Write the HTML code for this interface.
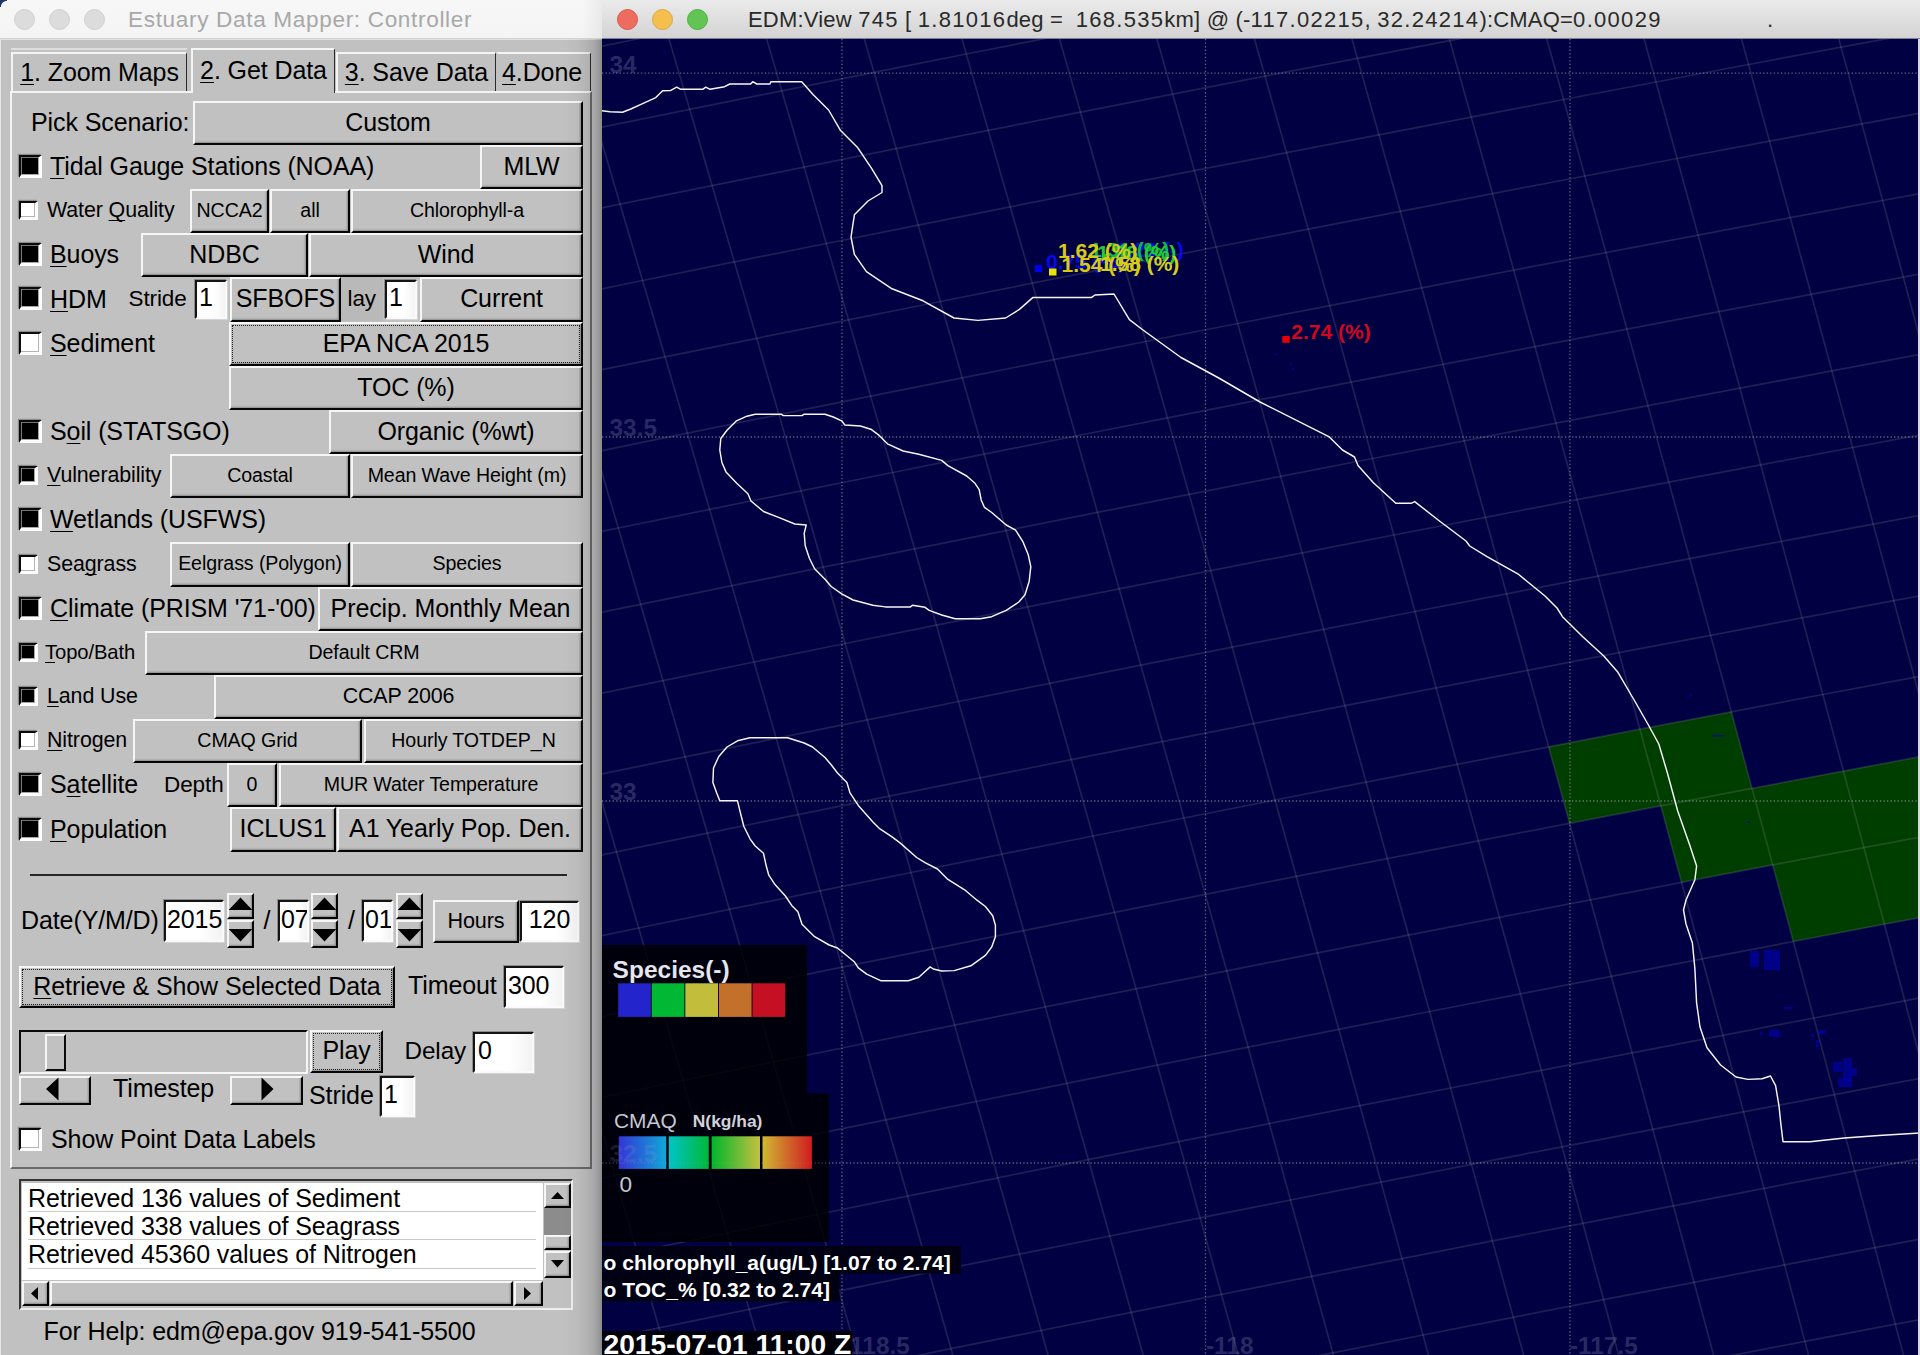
<!DOCTYPE html>
<html lang="en"><head><meta charset="utf-8"><title>Estuary Data Mapper</title>
<style>
*{box-sizing:border-box;margin:0;padding:0}
html,body{width:1920px;height:1355px;overflow:hidden;background:#000040}
body{position:relative;font-family:"Liberation Sans",sans-serif;font-size:25px;color:#000}
#ctl{letter-spacing:-.1px;position:absolute;left:0;top:0;width:602px;height:1355px;background:#c1c1c1;overflow:hidden}
#ctl .tbar{position:absolute;left:0;top:0;width:602px;height:40px;background:linear-gradient(#f7f7f7,#f4f4f4);border-bottom:1px solid #e2e2e2;box-shadow:inset 0 -1px 0 #d2d2d2}
.tl{position:absolute;top:8.5px;width:21px;height:21px;border-radius:50%}
.ttl{position:absolute;top:0;height:38px;line-height:39px;white-space:pre}
.a{position:absolute;white-space:pre}
.b{position:absolute;background:#c1c1c1;border:2px solid;border-color:#f6f6f6 #050505 #050505 #f6f6f6;text-align:center;white-space:pre;overflow:hidden;box-shadow:inset -2px -2px 2px -1px #8a8a8a}
.b i{position:absolute;left:1px;top:1px;right:1px;bottom:1px;border:1px dotted #222}
.t{position:absolute;white-space:pre}
.t u,.b u,.a u{text-decoration:underline;text-decoration-thickness:1.4px;text-underline-offset:3px;text-decoration-skip-ink:none}
.in{position:absolute;background:linear-gradient(90deg,#fff 60%,#f3f3f3);border:2px solid;border-color:#141414 #fafafa #fafafa #141414;white-space:pre;overflow:hidden;box-shadow:-1px -1px 0 #8c8c8c,1px 1px 0 #d4d4d4}
.ck{position:absolute;border-style:solid;border-width:2px 3px 3px 2px;border-color:#0a0a0a #fcfcfc #fcfcfc #0a0a0a;background:#fff;box-shadow:-1.2px -1.2px 0 #8c8c8c,inset -1px -1px 0 #b4b4b4}
.ck.on{background:#000;box-shadow:-1.2px -1.2px 0 #8c8c8c,inset -1px -1px 0 #a8a8a8,inset .8px .8px 0 #9a9a9a}
#map{position:absolute;left:602px;top:0;width:1318px;height:1355px;background:#000042;overflow:hidden}
#map .tbar{position:absolute;left:0;top:0;width:1318px;height:39px;background:linear-gradient(#ebebeb,#d3d3d3);border-bottom:1px solid #80809a}
svg text{font-family:"Liberation Sans",sans-serif}
</style></head>
<body>
<div id="ctl">
<div class="tbar"></div>
<div class="a" style="left:0;top:0;width:7px;height:7px;background:radial-gradient(circle at 7px 7px,rgba(31,53,102,0) 5.6px,#1f3566 6.6px)"></div>
<div class="a" style="left:0;top:40px;width:1px;height:1315px;background:#e6e6e6"></div>
<div class="tl" style="left:13.8px;background:#dcdcdc;border:1px solid #d0d0d0"></div>
<div class="tl" style="left:49.1px;background:#dcdcdc;border:1px solid #d0d0d0"></div>
<div class="tl" style="left:84.4px;background:#dcdcdc;border:1px solid #d0d0d0"></div>
<div class="ttl" style="left:128px;color:#a8a8a8;font-size:22.6px;letter-spacing:.65px">Estuary Data Mapper: Controller</div>
<div class="a" style="left:11px;top:48px;width:176px;height:2px;background:#dedede"></div>
<div class="a" style="left:10px;top:91px;width:582px;height:1078px;border:2px solid;border-color:#f4f4f4 #6a6a6a #6a6a6a #f4f4f4"></div>
<div class="a" style="left:11px;top:52px;width:176px;height:39px;background:#c1c1c1;border:2px solid;border-color:#f4f4f4 #2a2a2a transparent #f4f4f4;border-right-width:1.5px;border-bottom:0;text-align:center;line-height:36px;"><u>1</u>. Zoom Maps</div>
<div class="a" style="left:336px;top:52px;width:160px;height:39px;background:#c1c1c1;border:2px solid;border-color:#f4f4f4 #2a2a2a transparent #f4f4f4;border-right-width:1.5px;border-bottom:0;text-align:center;line-height:36px;"><u>3</u>. Save Data</div>
<div class="a" style="left:496px;top:52px;width:95px;height:39px;background:#c1c1c1;border:2px solid;border-color:#f4f4f4 #2a2a2a transparent #f4f4f4;border-right-width:1.5px;border-bottom:0;text-align:center;line-height:36px;border-left-color:transparent;padding-right:4px"><u>4</u>.Done</div>
<div class="a" style="left:191px;top:48px;width:144px;height:45px;background:#c1c1c1;border:2px solid;border-color:#f4f4f4 #2a2a2a transparent #f4f4f4;border-right-width:1.5px;border-bottom:0;text-align:center;line-height:40px"><u>2</u>. Get Data</div>
<div class="t" style="left:31px;top:102.0px;height:40px;line-height:40px;font-size:25.0px;">Pick Scenario:</div>
<div class="b" style="left:193px;top:101px;width:390px;height:44px;line-height:38px;font-size:25.0px;">Custom</div>
<div class="ck on" style="left:19px;top:155px;width:23px;height:23px"></div>
<div class="t" style="left:50px;top:146.0px;height:40px;line-height:40px;font-size:25.0px;"><u>T</u>idal Gauge Stations (NOAA)</div>
<div class="b" style="left:480px;top:145px;width:103px;height:44px;line-height:38px;font-size:25.0px;">MLW</div>
<div class="ck" style="left:19px;top:201px;width:19px;height:19px"></div>
<div class="t" style="left:47px;top:190.0px;height:40px;line-height:40px;font-size:21.4px;">Water <u>Q</u>uality</div>
<div class="b" style="left:190px;top:189px;width:79px;height:44px;line-height:38px;font-size:19.6px;">NCCA2</div>
<div class="b" style="left:270px;top:189px;width:80px;height:44px;line-height:38px;font-size:19.6px;">all</div>
<div class="b" style="left:351px;top:189px;width:232px;height:44px;line-height:38px;font-size:19.6px;">Chlorophyll-a</div>
<div class="ck on" style="left:19px;top:243px;width:23px;height:23px"></div>
<div class="t" style="left:50px;top:234.0px;height:40px;line-height:40px;font-size:25.0px;"><u>B</u>uoys</div>
<div class="b" style="left:141px;top:233px;width:167px;height:44px;line-height:38px;font-size:25.0px;">NDBC</div>
<div class="b" style="left:309px;top:233px;width:274px;height:44px;line-height:38px;font-size:25.0px;">Wind</div>
<div class="ck on" style="left:19px;top:287px;width:23px;height:23px"></div>
<div class="t" style="left:50px;top:278.5px;height:40px;line-height:40px;font-size:25.0px;"><u>H</u>DM</div>
<div class="t" style="left:128.5px;top:278.5px;height:40px;line-height:40px;font-size:22.5px;">Stride</div>
<div class="in" style="left:195px;top:280px;width:32px;height:39px;line-height:31px;font-size:25.0px;padding-left:2px;text-align:left">1</div>
<div class="b" style="left:230px;top:277px;width:111px;height:45px;line-height:39px;font-size:25.0px;">SFBOFS</div>
<div class="a" style="left:341px;top:277px;width:42px;height:44px;background:#b9b9b9"></div>
<div class="t" style="left:347.5px;top:278.5px;height:40px;line-height:40px;font-size:22.5px;">lay</div>
<div class="in" style="left:385px;top:280px;width:32px;height:39px;line-height:31px;font-size:25.0px;padding-left:2px;text-align:left">1</div>
<div class="b" style="left:420px;top:277px;width:163px;height:45px;line-height:39px;font-size:25.0px;">Current</div>
<div class="ck" style="left:19px;top:332px;width:23px;height:23px"></div>
<div class="t" style="left:50px;top:323.0px;height:40px;line-height:40px;font-size:25.0px;"><u>S</u>ediment</div>
<div class="b" style="left:229px;top:322px;width:354px;height:44px;line-height:38px;font-size:25.0px;"><i></i>EPA NCA 2015</div>
<div class="b" style="left:229px;top:366px;width:354px;height:44px;line-height:38px;font-size:25.0px;">TOC (%)</div>
<div class="ck on" style="left:19px;top:420px;width:23px;height:23px"></div>
<div class="t" style="left:50px;top:411.0px;height:40px;line-height:40px;font-size:25.0px;">S<u>o</u>il (STATSGO)</div>
<div class="b" style="left:329px;top:410px;width:254px;height:44px;line-height:38px;font-size:25.0px;">Organic (%wt)</div>
<div class="ck on" style="left:19px;top:466px;width:19px;height:19px"></div>
<div class="t" style="left:47px;top:455.0px;height:40px;line-height:40px;font-size:21.4px;"><u>V</u>ulnerability</div>
<div class="b" style="left:170px;top:454px;width:180px;height:44px;line-height:38px;font-size:19.6px;">Coastal</div>
<div class="b" style="left:351px;top:454px;width:232px;height:44px;line-height:38px;font-size:19.6px;">Mean Wave Height (m)</div>
<div class="ck on" style="left:19px;top:508px;width:23px;height:23px"></div>
<div class="t" style="left:50px;top:499.0px;height:40px;line-height:40px;font-size:25.0px;"><u>W</u>etlands (USFWS)</div>
<div class="ck" style="left:19px;top:555px;width:19px;height:19px"></div>
<div class="t" style="left:47px;top:543.5px;height:40px;line-height:40px;font-size:21.4px;">Sea<u>g</u>rass</div>
<div class="b" style="left:170px;top:542px;width:180px;height:45px;line-height:39px;font-size:19.6px;">Eelgrass (Polygon)</div>
<div class="b" style="left:351px;top:542px;width:232px;height:45px;line-height:39px;font-size:19.6px;">Species</div>
<div class="ck on" style="left:19px;top:597px;width:23px;height:23px"></div>
<div class="t" style="left:50px;top:588.0px;height:40px;line-height:40px;font-size:25.0px;"><u>C</u>limate (PRISM '71-'00)</div>
<div class="b" style="left:318px;top:587px;width:265px;height:44px;line-height:38px;font-size:25.0px;">Precip. Monthly Mean</div>
<div class="ck on" style="left:19px;top:643px;width:19px;height:19px"></div>
<div class="t" style="left:45px;top:632.0px;height:40px;line-height:40px;font-size:20.2px;"><u>T</u>opo/Bath</div>
<div class="b" style="left:145px;top:631px;width:438px;height:44px;line-height:38px;font-size:19.6px;">Default CRM</div>
<div class="ck on" style="left:19px;top:687px;width:19px;height:19px"></div>
<div class="t" style="left:47px;top:676.0px;height:40px;line-height:40px;font-size:21.4px;"><u>L</u>and Use</div>
<div class="b" style="left:214px;top:675px;width:369px;height:44px;line-height:38px;font-size:21.4px;">CCAP 2006</div>
<div class="ck" style="left:19px;top:731px;width:19px;height:19px"></div>
<div class="t" style="left:47px;top:720.0px;height:40px;line-height:40px;font-size:21.4px;"><u>N</u>itrogen</div>
<div class="b" style="left:133px;top:719px;width:229px;height:44px;line-height:38px;font-size:19.6px;">CMAQ Grid</div>
<div class="b" style="left:364px;top:719px;width:219px;height:44px;line-height:38px;font-size:19.6px;">Hourly TOTDEP_N</div>
<div class="ck on" style="left:19px;top:773px;width:23px;height:23px"></div>
<div class="t" style="left:50px;top:764.0px;height:40px;line-height:40px;font-size:25.0px;">S<u>a</u>tellite</div>
<div class="t" style="left:164px;top:765.0px;height:40px;line-height:40px;font-size:22.5px;">Depth</div>
<div class="b" style="left:227px;top:763px;width:50px;height:44px;line-height:38px;font-size:19.6px;">0</div>
<div class="b" style="left:279px;top:763px;width:304px;height:44px;line-height:38px;font-size:19.6px;">MUR Water Temperature</div>
<div class="ck on" style="left:19px;top:818px;width:23px;height:23px"></div>
<div class="t" style="left:50px;top:808.5px;height:40px;line-height:40px;font-size:25.0px;"><u>P</u>opulation</div>
<div class="b" style="left:230px;top:807px;width:106px;height:45px;line-height:39px;font-size:25.0px;">ICLUS1</div>
<div class="b" style="left:337px;top:807px;width:246px;height:45px;line-height:39px;font-size:25.0px;">A1 Yearly Pop. Den.</div>
<div class="a" style="left:30px;top:874px;width:537px;height:0;border-top:2px solid #262626"></div>
<div class="t" style="left:21px;top:900.0px;height:40px;line-height:40px;font-size:25.0px;">Date(Y/M/D)</div>
<div class="in" style="left:164px;top:900px;width:60px;height:42px;line-height:34px;font-size:25.0px;padding-left:1px;text-align:left">2015</div>
<div class="b" style="left:227px;top:893px;width:27px;height:26px"></div>
<div class="b" style="left:227px;top:920px;width:27px;height:28px"></div>
<svg class="a" style="left:227px;top:893px" width="27" height="56"><path d="M13.5 4.5 L25.3 17 L1.6999999999999993 17Z M1.6999999999999993 36 L25.3 36 L13.5 48.5Z" fill="#000"/></svg>
<div class="t" style="left:263.5px;top:900.0px;height:40px;line-height:40px;font-size:25.0px;">/</div>
<div class="in" style="left:278px;top:900px;width:31px;height:42px;line-height:34px;font-size:25.0px;padding-left:1px;text-align:left">07</div>
<div class="b" style="left:311px;top:893px;width:27px;height:26px"></div>
<div class="b" style="left:311px;top:920px;width:27px;height:28px"></div>
<svg class="a" style="left:311px;top:893px" width="27" height="56"><path d="M13.5 4.5 L25.3 17 L1.6999999999999993 17Z M1.6999999999999993 36 L25.3 36 L13.5 48.5Z" fill="#000"/></svg>
<div class="t" style="left:348px;top:900.0px;height:40px;line-height:40px;font-size:25.0px;">/</div>
<div class="in" style="left:362px;top:900px;width:31px;height:42px;line-height:34px;font-size:25.0px;padding-left:1px;text-align:left">01</div>
<div class="b" style="left:396px;top:893px;width:27px;height:26px"></div>
<div class="b" style="left:396px;top:920px;width:27px;height:28px"></div>
<svg class="a" style="left:396px;top:893px" width="27" height="56"><path d="M13.5 4.5 L25.3 17 L1.6999999999999993 17Z M1.6999999999999993 36 L25.3 36 L13.5 48.5Z" fill="#000"/></svg>
<div class="b" style="left:433px;top:900px;width:86px;height:43px;line-height:37px;font-size:21.6px;">Hours</div>
<div class="in" style="left:520px;top:901px;width:59px;height:41px;line-height:33px;font-size:25.0px;padding-left:0px;text-align:center">120</div>
<div class="b" style="left:19px;top:966px;width:376px;height:42px;line-height:36px;font-size:25.0px;"><i></i><u>R</u>etrieve &amp; Show Selected Data</div>
<div class="t" style="left:408px;top:965.0px;height:40px;line-height:40px;font-size:25.0px;">Timeout</div>
<div class="in" style="left:504px;top:966px;width:60px;height:42px;line-height:34px;font-size:25.0px;padding-left:2px;text-align:left">300</div>
<div class="a" style="left:19px;top:1030px;width:289px;height:44px;border:2px solid;border-color:#0a0a0a #f6f6f6 #f6f6f6 #0a0a0a;background:#c1c1c1"></div>
<div class="a" style="left:45px;top:1034px;width:21px;height:37px;border:2px solid;border-color:#f6f6f6 #0a0a0a #0a0a0a #f6f6f6"></div>
<div class="b" style="left:310px;top:1030px;width:73px;height:43px;line-height:37px;font-size:25.0px;"><i></i>Play</div>
<div class="t" style="left:404.5px;top:1031.0px;height:40px;line-height:40px;font-size:24.3px;">Delay</div>
<div class="in" style="left:473px;top:1032px;width:61px;height:41px;line-height:33px;font-size:25.0px;padding-left:3px;text-align:left">0</div>
<div class="b" style="left:19px;top:1076px;width:72px;height:29px;line-height:23px;font-size:25.0px;"></div>
<div class="b" style="left:230px;top:1076px;width:73px;height:29px;line-height:23px;font-size:25.0px;"></div>
<svg class="a" style="left:19px;top:1076px" width="290" height="30"><path d="M27 13 L39.5 1.5 L39.5 24.5Z M242.5 1.5 L254.5 13 L242.5 24.5Z" fill="#000"/></svg>
<div class="t" style="left:113px;top:1067.5px;height:40px;line-height:40px;font-size:25.0px;">Timestep</div>
<div class="t" style="left:309px;top:1075.0px;height:40px;line-height:40px;font-size:25.0px;">Stride</div>
<div class="in" style="left:380px;top:1076px;width:35px;height:41px;line-height:33px;font-size:25.0px;padding-left:2px;text-align:left">1</div>
<div class="ck" style="left:19px;top:1128px;width:23px;height:23px"></div>
<div class="t" style="left:51px;top:1119.0px;height:40px;line-height:40px;font-size:25.0px;">Show Point Data Labels</div>
<div class="a" style="left:19px;top:1179px;width:554px;height:131px;border:2px solid;border-color:#333 #eee #eee #333"></div>
<div class="a" style="left:22px;top:1183px;width:521px;height:97px;background:#fff;overflow:hidden">
<div class="a" style="left:6px;top:1.0px;width:508px;height:28.2px;line-height:28px;border-bottom:1px solid #c9c9c9">Retrieved 136 values of Sediment</div>
<div class="a" style="left:6px;top:29.2px;width:508px;height:28.2px;line-height:28px;border-bottom:1px solid #c9c9c9">Retrieved 338 values of Seagrass</div>
<div class="a" style="left:6px;top:57.4px;width:508px;height:28.2px;line-height:28px;border-bottom:1px solid #c9c9c9">Retrieved 45360 values of Nitrogen</div>
</div>
<div class="a" style="left:544px;top:1183px;width:27px;height:95px;background:#c8c8c8"></div>
<div class="b" style="left:544px;top:1183px;width:27px;height:25px;line-height:19px;font-size:25.0px;"></div>
<div class="a" style="left:544px;top:1208px;width:27px;height:27px;background:#8c8c8c"></div>
<div class="b" style="left:544px;top:1235px;width:27px;height:15px;line-height:9px;font-size:25.0px;"></div>
<div class="b" style="left:544px;top:1251px;width:27px;height:27px;line-height:21px;font-size:25.0px;"></div>
<svg class="a" style="left:544px;top:1183px" width="27" height="95"><path d="M7 16 L13.5 9 L20 16Z M7 77 L20 77 L13.5 84.5Z" fill="#000"/></svg>
<div class="a" style="left:22px;top:1281px;width:521px;height:25px;background:#c1c1c1"></div>
<div class="b" style="left:22px;top:1281px;width:27px;height:25px;line-height:19px;font-size:25.0px;"></div>
<div class="b" style="left:50px;top:1281px;width:463px;height:25px;line-height:19px;font-size:25.0px;"></div>
<div class="b" style="left:514px;top:1281px;width:29px;height:25px;line-height:19px;font-size:25.0px;"></div>
<svg class="a" style="left:22px;top:1281px" width="521" height="25"><path d="M9 12.5 L16 6 L16 19Z M502 6 L509 12.5 L502 19Z" fill="#000"/></svg>
<div class="t" style="left:43.5px;top:1311.0px;height:40px;line-height:40px;font-size:25.0px;">For Help: edm@epa.gov 919-541-5500</div>
<div class="a" style="left:562px;top:39px;width:40px;height:1316px;background:linear-gradient(90deg,rgba(0,0,0,0) 0,rgba(0,0,0,.025) 35%,rgba(0,0,0,.07) 60%,rgba(0,0,0,.13) 80%,rgba(0,0,0,.2) 92%,rgba(0,0,0,.29) 100%)"></div>
<div class="a" style="left:582px;top:0;width:20px;height:38px;background:linear-gradient(90deg,rgba(0,0,0,0),rgba(0,0,0,.05))"></div>
</div>
<div id="map">
<svg class="a" style="left:-602px;top:0" width="1920" height="1355" viewBox="0 0 1920 1355">
<defs>
<linearGradient id="g1"><stop offset="0" stop-color="#3434d6"/><stop offset="1" stop-color="#10a8d8"/></linearGradient>
<linearGradient id="g2"><stop offset="0" stop-color="#00c4c8"/><stop offset="1" stop-color="#00b838"/></linearGradient>
<linearGradient id="g3"><stop offset="0" stop-color="#00b62c"/><stop offset="1" stop-color="#c4c040"/></linearGradient>
<linearGradient id="g4"><stop offset="0" stop-color="#d0b832"/><stop offset="1" stop-color="#d01c20"/></linearGradient>
</defs>
<path d="M1548.6 746.8 L1639.9 729.2 L1731.3 711.8 L1752.0 788.4 L1843.4 771.1 L1934.8 753.9 L2026.2 736.8 L2117.7 719.8 L2137.9 796.5 L2158.0 873.1 L2066.7 890.1 L1975.5 907.1 L1884.4 924.2 L1793.3 941.5 L1772.7 864.9 L1681.5 882.3 L1660.8 805.8 L1569.6 823.3Z" fill="#003e00"/>
<g fill="#0000a4" fill-opacity=".72">
<rect x="1750" y="951" width="9" height="16"/>
<rect x="1764" y="950" width="16" height="20"/>
<rect x="1769" y="1030" width="11" height="7"/>
<rect x="1760" y="1032" width="3" height="3"/>
<rect x="1818" y="1030" width="8" height="4"/>
<rect x="1811" y="1034" width="3" height="3"/>
<rect x="1816" y="1040" width="3" height="7"/>
<rect x="1833" y="1062" width="9" height="10"/>
<rect x="1843" y="1058" width="9" height="22"/>
<rect x="1838" y="1078" width="14" height="9"/>
<rect x="1852" y="1068" width="5" height="8"/>
<rect x="1784" y="1007" width="9" height="2"/>
<rect x="1687" y="696.5" width="2.5" height="1.5"/>
<rect x="1689.5" y="694.5" width="2.5" height="1.5"/>
<rect x="1712" y="735" width="12" height="1.6"/>
<rect x="1747" y="821.5" width="3.5" height="1.5"/>
<rect x="1290" y="362.5" width="2" height="2"/>
<rect x="1292" y="368" width="2" height="2"/>
<rect x="664.5" y="51.3" width="2" height="1.6"/>
<rect x="1275" y="353.2" width="2" height="2"/>
</g>
<g stroke="#a4a4ac" stroke-opacity=".19" stroke-width="1.7" fill="none">
<path d="M-47.0 -62.5 L-23.6 13.6 L-0.1 89.8 L23.3 165.9 L46.6 242.0 L69.8 318.2 L93.0 394.3 L116.2 470.5 L139.3 546.6 L162.3 622.8 L185.3 698.9 L208.2 775.1 L231.0 851.2 L253.8 927.4 L276.5 1003.5 L299.2 1079.7 L321.8 1155.8 L344.4 1232.0 L366.9 1308.1 L389.3 1384.3 L411.7 1460.4 L434.1 1536.6 L456.3 1612.8 L478.5 1688.9 L500.7 1765.1 L522.8 1841.2 L544.8 1917.4"/>
<path d="M45.1 -81.9 L68.5 -5.7 L91.8 70.4 L115.1 146.6 L138.3 222.8 L161.4 298.9 L184.5 375.1 L207.5 451.3 L230.5 527.4 L253.4 603.6 L276.2 679.8 L299.0 756.0 L321.7 832.1 L344.4 908.3 L367.0 984.5 L389.6 1060.7 L412.0 1136.8 L434.5 1213.0 L456.9 1289.2 L479.2 1365.4 L501.5 1441.6 L523.7 1517.7 L545.8 1593.9 L567.9 1670.1 L589.9 1746.3 L611.9 1822.5 L633.8 1898.7"/>
<path d="M137.4 -101.2 L160.6 -25.0 L183.8 51.2 L206.9 127.4 L230.0 203.6 L253.0 279.8 L276.0 356.0 L298.9 432.2 L321.7 508.4 L344.5 584.6 L367.2 660.8 L389.9 737.0 L412.5 813.2 L435.0 889.4 L457.5 965.6 L479.9 1041.8 L502.3 1118.0 L524.6 1194.2 L546.9 1270.4 L569.1 1346.6 L591.2 1422.8 L613.3 1499.0 L635.3 1575.2 L657.3 1651.4 L679.2 1727.6 L701.1 1803.8 L722.8 1880.0"/>
<path d="M229.7 -120.4 L252.8 -44.1 L275.9 32.1 L298.9 108.3 L321.8 184.5 L344.7 260.7 L367.5 336.9 L390.3 413.2 L413.0 489.4 L435.7 565.6 L458.3 641.8 L480.8 718.1 L503.3 794.3 L525.7 870.5 L548.1 946.7 L570.4 1023.0 L592.7 1099.2 L614.8 1175.4 L637.0 1251.6 L659.1 1327.9 L681.1 1404.1 L703.0 1480.3 L724.9 1556.6 L746.8 1632.8 L768.6 1709.0 L790.3 1785.3 L811.9 1861.5"/>
<path d="M322.0 -139.4 L345.0 -63.2 L368.0 13.1 L390.9 89.3 L413.7 165.5 L436.5 241.8 L459.2 318.0 L481.8 394.3 L504.4 470.5 L526.9 546.8 L549.4 623.0 L571.8 699.3 L594.2 775.5 L616.5 851.8 L638.7 928.0 L660.9 1004.3 L683.0 1080.5 L705.1 1156.8 L727.1 1233.0 L749.1 1309.3 L771.0 1385.5 L792.8 1461.8 L814.6 1538.0 L836.3 1614.3 L858.0 1690.6 L879.6 1766.8 L901.1 1843.1"/>
<path d="M414.5 -158.4 L437.4 -82.1 L460.2 -5.8 L482.9 70.4 L505.6 146.7 L528.3 223.0 L550.9 299.2 L573.4 375.5 L595.9 451.8 L618.3 528.0 L640.6 604.3 L662.9 680.6 L685.1 756.9 L707.3 833.1 L729.4 909.4 L751.5 985.7 L773.5 1062.0 L795.5 1138.2 L817.3 1214.5 L839.2 1290.8 L860.9 1367.1 L882.6 1443.3 L904.3 1519.6 L925.9 1595.9 L947.4 1672.2 L968.9 1748.5 L990.3 1824.8"/>
<path d="M507.0 -177.2 L529.7 -100.9 L552.4 -24.6 L575.1 51.7 L597.6 127.9 L620.1 204.2 L642.6 280.5 L665.0 356.8 L687.4 433.1 L709.6 509.4 L731.9 585.7 L754.0 662.0 L776.2 738.3 L798.2 814.6 L820.2 890.9 L842.1 967.2 L864.0 1043.5 L885.8 1119.8 L907.6 1196.1 L929.3 1272.4 L951.0 1348.7 L972.6 1425.0 L994.1 1501.3 L1015.6 1577.6 L1037.0 1653.9 L1058.3 1730.3 L1079.6 1806.6"/>
<path d="M599.5 -196.0 L622.2 -119.6 L644.7 -43.3 L667.2 33.0 L689.7 109.3 L712.1 185.6 L734.4 261.9 L756.7 338.3 L778.9 414.6 L801.1 490.9 L823.2 567.2 L845.2 643.5 L867.2 719.9 L889.2 796.2 L911.0 872.5 L932.9 948.8 L954.6 1025.2 L976.3 1101.5 L997.9 1177.8 L1019.5 1254.1 L1041.1 1330.5 L1062.5 1406.8 L1083.9 1483.1 L1105.3 1559.5 L1126.6 1635.8 L1147.8 1712.1 L1169.0 1788.5"/>
<path d="M692.1 -214.6 L714.6 -138.2 L737.1 -61.9 L759.5 14.4 L781.8 90.8 L804.1 167.1 L826.3 243.5 L848.5 319.8 L870.6 396.1 L892.6 472.5 L914.6 548.8 L936.5 625.2 L958.4 701.5 L980.2 777.9 L1001.9 854.2 L1023.6 930.6 L1045.3 1006.9 L1066.8 1083.3 L1088.3 1159.6 L1109.8 1236.0 L1131.2 1312.3 L1152.6 1388.7 L1173.8 1465.0 L1195.1 1541.4 L1216.2 1617.8 L1237.3 1694.1 L1258.4 1770.5"/>
<path d="M784.8 -233.1 L807.2 -156.7 L829.5 -80.4 L851.8 -4.0 L874.0 72.3 L896.2 148.7 L918.2 225.1 L940.3 301.5 L962.3 377.8 L984.2 454.2 L1006.0 530.6 L1027.8 606.9 L1049.6 683.3 L1071.3 759.7 L1092.9 836.0 L1114.5 912.4 L1136.0 988.8 L1157.4 1065.2 L1178.8 1141.6 L1200.1 1217.9 L1221.4 1294.3 L1242.6 1370.7 L1263.8 1447.1 L1284.9 1523.4 L1306.0 1599.8 L1326.9 1676.2 L1347.9 1752.6"/>
<path d="M877.6 -251.5 L899.8 -175.1 L922.0 -98.7 L944.2 -22.4 L966.3 54.0 L988.3 130.4 L1010.2 206.8 L1032.2 283.2 L1054.0 359.6 L1075.8 436.0 L1097.5 512.4 L1119.2 588.8 L1140.8 665.2 L1162.4 741.6 L1183.9 818.0 L1205.3 894.4 L1226.7 970.8 L1248.1 1047.2 L1269.3 1123.6 L1290.5 1200.0 L1311.7 1276.4 L1332.8 1352.8 L1353.8 1429.2 L1374.8 1505.6 L1395.7 1582.0 L1416.6 1658.4 L1437.4 1734.8"/>
<path d="M970.4 -269.8 L992.5 -193.4 L1014.6 -117.0 L1036.6 -40.6 L1058.6 35.8 L1080.5 112.2 L1102.3 188.7 L1124.1 265.1 L1145.8 341.5 L1167.5 417.9 L1189.1 494.3 L1210.7 570.7 L1232.2 647.2 L1253.6 723.6 L1275.0 800.0 L1296.3 876.4 L1317.6 952.9 L1338.8 1029.3 L1359.9 1105.7 L1381.0 1182.1 L1402.0 1258.6 L1423.0 1335.0 L1443.9 1411.4 L1464.8 1487.9 L1485.6 1564.3 L1506.3 1640.7 L1527.0 1717.2"/>
<path d="M1063.2 -288.0 L1085.2 -211.6 L1107.2 -135.2 L1129.1 -58.7 L1150.9 17.7 L1172.7 94.2 L1194.4 170.6 L1216.1 247.0 L1237.7 323.5 L1259.3 399.9 L1280.7 476.4 L1302.2 552.8 L1323.6 629.3 L1344.9 705.7 L1366.1 782.2 L1387.3 858.6 L1408.5 935.1 L1429.5 1011.5 L1450.6 1088.0 L1471.5 1164.4 L1492.4 1240.9 L1513.3 1317.3 L1534.1 1393.8 L1554.8 1470.2 L1575.5 1546.7 L1596.1 1623.1 L1616.7 1699.6"/>
<path d="M1156.2 -306.1 L1178.1 -229.7 L1199.9 -153.2 L1221.7 -76.7 L1243.4 -0.3 L1265.0 76.2 L1286.6 152.7 L1308.2 229.1 L1329.7 305.6 L1351.1 382.1 L1372.4 458.5 L1393.8 535.0 L1415.0 611.5 L1436.2 687.9 L1457.3 764.4 L1478.4 840.9 L1499.4 917.4 L1520.4 993.8 L1541.3 1070.3 L1562.1 1146.8 L1582.9 1223.3 L1603.6 1299.7 L1624.3 1376.2 L1644.9 1452.7 L1665.5 1529.2 L1686.0 1605.7 L1706.4 1682.1"/>
<path d="M1249.2 -324.1 L1270.9 -247.6 L1292.6 -171.1 L1314.3 -94.6 L1335.9 -18.2 L1357.4 58.3 L1378.9 134.8 L1400.3 211.3 L1421.7 287.8 L1443.0 364.3 L1464.2 440.8 L1485.4 517.3 L1506.5 593.8 L1527.6 670.3 L1548.6 746.8 L1569.6 823.3 L1590.4 899.8 L1611.3 976.3 L1632.1 1052.8 L1652.8 1129.3 L1673.4 1205.8 L1694.0 1282.3 L1714.6 1358.8 L1735.1 1435.3 L1755.5 1511.8 L1775.9 1588.3 L1796.2 1664.8"/>
<path d="M1342.2 -342.0 L1363.9 -265.5 L1385.4 -189.0 L1407.0 -112.5 L1428.4 -35.9 L1449.8 40.6 L1471.2 117.1 L1492.5 193.6 L1513.7 270.1 L1534.9 346.6 L1556.0 423.2 L1577.1 499.7 L1598.1 576.2 L1619.0 652.7 L1639.9 729.2 L1660.8 805.8 L1681.5 882.3 L1702.2 958.8 L1722.9 1035.3 L1743.5 1111.9 L1764.0 1188.4 L1784.5 1264.9 L1804.9 1341.4 L1825.3 1418.0 L1845.6 1494.5 L1865.9 1571.0 L1886.0 1647.6"/>
<path d="M1435.3 -359.8 L1456.8 -283.2 L1478.3 -206.7 L1499.7 -130.1 L1521.1 -53.6 L1542.4 22.9 L1563.6 99.5 L1584.8 176.0 L1605.9 252.6 L1626.9 329.1 L1647.9 405.6 L1668.9 482.2 L1689.7 558.7 L1710.6 635.3 L1731.3 711.8 L1752.0 788.4 L1772.7 864.9 L1793.3 941.5 L1813.8 1018.0 L1834.3 1094.6 L1854.7 1171.1 L1875.0 1247.7 L1895.3 1324.2 L1915.6 1400.8 L1935.8 1477.3 L1955.9 1553.9 L1976.0 1630.4"/>
<path d="M1528.5 -377.4 L1549.9 -300.9 L1571.2 -224.3 L1592.5 -147.7 L1613.8 -71.2 L1634.9 5.4 L1656.0 82.0 L1677.1 158.5 L1698.1 235.1 L1719.0 311.7 L1739.9 388.2 L1760.7 464.8 L1781.4 541.4 L1802.1 617.9 L1822.8 694.5 L1843.4 771.1 L1863.9 847.6 L1884.4 924.2 L1904.8 1000.8 L1925.1 1077.4 L1945.4 1153.9 L1965.6 1230.5 L1985.8 1307.1 L2005.9 1383.7 L2026.0 1460.3 L2046.0 1536.8 L2065.9 1613.4"/>
<path d="M1621.8 -395.0 L1643.0 -318.4 L1664.2 -241.8 L1685.4 -165.2 L1706.5 -88.6 L1727.5 -12.0 L1748.5 64.5 L1769.5 141.1 L1790.3 217.7 L1811.1 294.3 L1831.9 370.9 L1852.6 447.5 L1873.2 524.1 L1893.8 600.7 L1914.3 677.3 L1934.8 753.9 L1955.2 830.5 L1975.5 907.1 L1995.8 983.7 L2016.0 1060.3 L2036.2 1136.9 L2056.3 1213.5 L2076.3 1290.1 L2096.3 1366.7 L2116.3 1443.3 L2136.2 1519.9 L2156.0 1596.5"/>
<path d="M1715.1 -412.4 L1736.2 -335.8 L1757.3 -259.2 L1778.3 -182.6 L1799.3 -106.0 L1820.2 -29.4 L1841.1 47.2 L1861.9 123.9 L1882.6 200.5 L1903.3 277.1 L1924.0 353.7 L1944.5 430.3 L1965.0 507.0 L1985.5 583.6 L2005.9 660.2 L2026.2 736.8 L2046.5 813.4 L2066.7 890.1 L2086.9 966.7 L2107.0 1043.3 L2127.0 1119.9 L2147.0 1196.6 L2166.9 1273.2 L2186.8 1349.8 L2206.6 1426.4 L2226.4 1503.1 L2246.1 1579.7"/>
<path d="M1808.4 -429.8 L1829.5 -353.1 L1850.4 -276.5 L1871.3 -199.9 L1892.2 -123.2 L1913.0 -46.6 L1933.7 30.1 L1954.4 106.7 L1975.0 183.3 L1995.6 260.0 L2016.1 336.6 L2036.5 413.3 L2056.9 489.9 L2077.3 566.6 L2097.5 643.2 L2117.7 719.8 L2137.9 796.5 L2158.0 873.1 L2178.0 949.8 L2198.0 1026.4 L2217.9 1103.1 L2237.8 1179.7 L2257.6 1256.4 L2277.3 1333.0 L2297.0 1409.7 L2316.7 1486.3 L2336.2 1563.0"/>
<path d="M1901.9 -447.0 L1922.8 -370.3 L1943.6 -293.7 L1964.4 -217.0 L1985.1 -140.4 L2005.8 -63.7 L2026.4 13.0 L2047.0 89.6 L2067.5 166.3 L2087.9 243.0 L2108.3 319.6 L2128.6 396.3 L2148.9 473.0 L2169.1 549.6 L2189.2 626.3 L2209.3 703.0 L2229.3 779.7 L2249.3 856.3 L2269.2 933.0 L2289.1 1009.7 L2308.9 1086.3 L2328.6 1163.0 L2348.3 1239.7 L2367.9 1316.4 L2387.5 1393.1 L2407.0 1469.7 L2426.5 1546.4"/>
<path d="M-115.5 33.1 L-23.6 13.6 L68.5 -5.7 L160.6 -25.0 L252.8 -44.1 L345.0 -63.2 L437.4 -82.1 L529.7 -100.9 L622.2 -119.6 L714.6 -138.2 L807.2 -156.7 L899.8 -175.1 L992.5 -193.4 L1085.2 -211.6 L1178.1 -229.7 L1270.9 -247.6 L1363.9 -265.5 L1456.8 -283.2 L1549.9 -300.9 L1643.0 -318.4 L1736.2 -335.8 L1829.5 -353.1 L1922.8 -370.3 L2016.1 -387.4"/>
<path d="M-92.0 109.2 L-0.1 89.8 L91.8 70.4 L183.8 51.2 L275.9 32.1 L368.0 13.1 L460.2 -5.8 L552.4 -24.6 L644.7 -43.3 L737.1 -61.9 L829.5 -80.4 L922.0 -98.7 L1014.6 -117.0 L1107.2 -135.2 L1199.9 -153.2 L1292.6 -171.1 L1385.4 -189.0 L1478.3 -206.7 L1571.2 -224.3 L1664.2 -241.8 L1757.3 -259.2 L1850.4 -276.5 L1943.6 -293.7 L2036.9 -310.8"/>
<path d="M-68.5 185.3 L23.3 165.9 L115.1 146.6 L206.9 127.4 L298.9 108.3 L390.9 89.3 L482.9 70.4 L575.1 51.7 L667.2 33.0 L759.5 14.4 L851.8 -4.0 L944.2 -22.4 L1036.6 -40.6 L1129.1 -58.7 L1221.7 -76.7 L1314.3 -94.6 L1407.0 -112.5 L1499.7 -130.1 L1592.5 -147.7 L1685.4 -165.2 L1778.3 -182.6 L1871.3 -199.9 L1964.4 -217.0 L2057.5 -234.1"/>
<path d="M-45.1 261.4 L46.6 242.0 L138.3 222.8 L230.0 203.6 L321.8 184.5 L413.7 165.5 L505.6 146.7 L597.6 127.9 L689.7 109.3 L781.8 90.8 L874.0 72.3 L966.3 54.0 L1058.6 35.8 L1150.9 17.7 L1243.4 -0.3 L1335.9 -18.2 L1428.4 -35.9 L1521.1 -53.6 L1613.8 -71.2 L1706.5 -88.6 L1799.3 -106.0 L1892.2 -123.2 L1985.1 -140.4 L2078.1 -157.4"/>
<path d="M-21.7 337.6 L69.8 318.2 L161.4 298.9 L253.0 279.8 L344.7 260.7 L436.5 241.8 L528.3 223.0 L620.1 204.2 L712.1 185.6 L804.1 167.1 L896.2 148.7 L988.3 130.4 L1080.5 112.2 L1172.7 94.2 L1265.0 76.2 L1357.4 58.3 L1449.8 40.6 L1542.4 22.9 L1634.9 5.4 L1727.5 -12.0 L1820.2 -29.4 L1913.0 -46.6 L2005.8 -63.7 L2098.7 -80.7"/>
<path d="M1.7 413.7 L93.0 394.3 L184.5 375.1 L276.0 356.0 L367.5 336.9 L459.2 318.0 L550.9 299.2 L642.6 280.5 L734.4 261.9 L826.3 243.5 L918.2 225.1 L1010.2 206.8 L1102.3 188.7 L1194.4 170.6 L1286.6 152.7 L1378.9 134.8 L1471.2 117.1 L1563.6 99.5 L1656.0 82.0 L1748.5 64.5 L1841.1 47.2 L1933.7 30.1 L2026.4 13.0 L2119.2 -4.0"/>
<path d="M24.9 489.8 L116.2 470.5 L207.5 451.3 L298.9 432.2 L390.3 413.2 L481.8 394.3 L573.4 375.5 L665.0 356.8 L756.7 338.3 L848.5 319.8 L940.3 301.5 L1032.2 283.2 L1124.1 265.1 L1216.1 247.0 L1308.2 229.1 L1400.3 211.3 L1492.5 193.6 L1584.8 176.0 L1677.1 158.5 L1769.5 141.1 L1861.9 123.9 L1954.4 106.7 L2047.0 89.6 L2139.6 72.7"/>
<path d="M48.1 565.9 L139.3 546.6 L230.5 527.4 L321.7 508.4 L413.0 489.4 L504.4 470.5 L595.9 451.8 L687.4 433.1 L778.9 414.6 L870.6 396.1 L962.3 377.8 L1054.0 359.6 L1145.8 341.5 L1237.7 323.5 L1329.7 305.6 L1421.7 287.8 L1513.7 270.1 L1605.9 252.6 L1698.1 235.1 L1790.3 217.7 L1882.6 200.5 L1975.0 183.3 L2067.5 166.3 L2160.0 149.4"/>
<path d="M71.3 642.0 L162.3 622.8 L253.4 603.6 L344.5 584.6 L435.7 565.6 L526.9 546.8 L618.3 528.0 L709.6 509.4 L801.1 490.9 L892.6 472.5 L984.2 454.2 L1075.8 436.0 L1167.5 417.9 L1259.3 399.9 L1351.1 382.1 L1443.0 364.3 L1534.9 346.6 L1626.9 329.1 L1719.0 311.7 L1811.1 294.3 L1903.3 277.1 L1995.6 260.0 L2087.9 243.0 L2180.3 226.1"/>
<path d="M94.4 718.2 L185.3 698.9 L276.2 679.8 L367.2 660.8 L458.3 641.8 L549.4 623.0 L640.6 604.3 L731.9 585.7 L823.2 567.2 L914.6 548.8 L1006.0 530.6 L1097.5 512.4 L1189.1 494.3 L1280.7 476.4 L1372.4 458.5 L1464.2 440.8 L1556.0 423.2 L1647.9 405.6 L1739.9 388.2 L1831.9 370.9 L1924.0 353.7 L2016.1 336.6 L2108.3 319.6 L2200.5 302.8"/>
<path d="M117.4 794.3 L208.2 775.1 L299.0 756.0 L389.9 737.0 L480.8 718.1 L571.8 699.3 L662.9 680.6 L754.0 662.0 L845.2 643.5 L936.5 625.2 L1027.8 606.9 L1119.2 588.8 L1210.7 570.7 L1302.2 552.8 L1393.8 535.0 L1485.4 517.3 L1577.1 499.7 L1668.9 482.2 L1760.7 464.8 L1852.6 447.5 L1944.5 430.3 L2036.5 413.3 L2128.6 396.3 L2220.7 379.4"/>
<path d="M140.4 870.4 L231.0 851.2 L321.7 832.1 L412.5 813.2 L503.3 794.3 L594.2 775.5 L685.1 756.9 L776.2 738.3 L867.2 719.9 L958.4 701.5 L1049.6 683.3 L1140.8 665.2 L1232.2 647.2 L1323.6 629.3 L1415.0 611.5 L1506.5 593.8 L1598.1 576.2 L1689.7 558.7 L1781.4 541.4 L1873.2 524.1 L1965.0 507.0 L2056.9 489.9 L2148.9 473.0 L2240.9 456.1"/>
<path d="M163.3 946.5 L253.8 927.4 L344.4 908.3 L435.0 889.4 L525.7 870.5 L616.5 851.8 L707.3 833.1 L798.2 814.6 L889.2 796.2 L980.2 777.9 L1071.3 759.7 L1162.4 741.6 L1253.6 723.6 L1344.9 705.7 L1436.2 687.9 L1527.6 670.3 L1619.0 652.7 L1710.6 635.3 L1802.1 617.9 L1893.8 600.7 L1985.5 583.6 L2077.3 566.6 L2169.1 549.6 L2261.0 532.8"/>
<path d="M186.2 1022.7 L276.5 1003.5 L367.0 984.5 L457.5 965.6 L548.1 946.7 L638.7 928.0 L729.4 909.4 L820.2 890.9 L911.0 872.5 L1001.9 854.2 L1092.9 836.0 L1183.9 818.0 L1275.0 800.0 L1366.1 782.2 L1457.3 764.4 L1548.6 746.8 L1639.9 729.2 L1731.3 711.8 L1822.8 694.5 L1914.3 677.3 L2005.9 660.2 L2097.5 643.2 L2189.2 626.3 L2281.0 609.5"/>
<path d="M209.0 1098.8 L299.2 1079.7 L389.6 1060.7 L479.9 1041.8 L570.4 1023.0 L660.9 1004.3 L751.5 985.7 L842.1 967.2 L932.9 948.8 L1023.6 930.6 L1114.5 912.4 L1205.3 894.4 L1296.3 876.4 L1387.3 858.6 L1478.4 840.9 L1569.6 823.3 L1660.8 805.8 L1752.0 788.4 L1843.4 771.1 L1934.8 753.9 L2026.2 736.8 L2117.7 719.8 L2209.3 703.0 L2301.0 686.2"/>
<path d="M231.7 1174.9 L321.8 1155.8 L412.0 1136.8 L502.3 1118.0 L592.7 1099.2 L683.0 1080.5 L773.5 1062.0 L864.0 1043.5 L954.6 1025.2 L1045.3 1006.9 L1136.0 988.8 L1226.7 970.8 L1317.6 952.9 L1408.5 935.1 L1499.4 917.4 L1590.4 899.8 L1681.5 882.3 L1772.7 864.9 L1863.9 847.6 L1955.2 830.5 L2046.5 813.4 L2137.9 796.5 L2229.3 779.7 L2320.9 762.9"/>
<path d="M254.4 1251.1 L344.4 1232.0 L434.5 1213.0 L524.6 1194.2 L614.8 1175.4 L705.1 1156.8 L795.5 1138.2 L885.8 1119.8 L976.3 1101.5 L1066.8 1083.3 L1157.4 1065.2 L1248.1 1047.2 L1338.8 1029.3 L1429.5 1011.5 L1520.4 993.8 L1611.3 976.3 L1702.2 958.8 L1793.3 941.5 L1884.4 924.2 L1975.5 907.1 L2066.7 890.1 L2158.0 873.1 L2249.3 856.3 L2340.7 839.6"/>
<path d="M277.0 1327.2 L366.9 1308.1 L456.9 1289.2 L546.9 1270.4 L637.0 1251.6 L727.1 1233.0 L817.3 1214.5 L907.6 1196.1 L997.9 1177.8 L1088.3 1159.6 L1178.8 1141.6 L1269.3 1123.6 L1359.9 1105.7 L1450.6 1088.0 L1541.3 1070.3 L1632.1 1052.8 L1722.9 1035.3 L1813.8 1018.0 L1904.8 1000.8 L1995.8 983.7 L2086.9 966.7 L2178.0 949.8 L2269.2 933.0 L2360.5 916.3"/>
<path d="M299.6 1403.3 L389.3 1384.3 L479.2 1365.4 L569.1 1346.6 L659.1 1327.9 L749.1 1309.3 L839.2 1290.8 L929.3 1272.4 L1019.5 1254.1 L1109.8 1236.0 L1200.1 1217.9 L1290.5 1200.0 L1381.0 1182.1 L1471.5 1164.4 L1562.1 1146.8 L1652.8 1129.3 L1743.5 1111.9 L1834.3 1094.6 L1925.1 1077.4 L2016.0 1060.3 L2107.0 1043.3 L2198.0 1026.4 L2289.1 1009.7 L2380.2 993.0"/>
<path d="M322.1 1479.4 L411.7 1460.4 L501.5 1441.6 L591.2 1422.8 L681.1 1404.1 L771.0 1385.5 L860.9 1367.1 L951.0 1348.7 L1041.1 1330.5 L1131.2 1312.3 L1221.4 1294.3 L1311.7 1276.4 L1402.0 1258.6 L1492.4 1240.9 L1582.9 1223.3 L1673.4 1205.8 L1764.0 1188.4 L1854.7 1171.1 L1945.4 1153.9 L2036.2 1136.9 L2127.0 1119.9 L2217.9 1103.1 L2308.9 1086.3 L2399.9 1069.7"/>
<path d="M344.5 1555.6 L434.1 1536.6 L523.7 1517.7 L613.3 1499.0 L703.0 1480.3 L792.8 1461.8 L882.6 1443.3 L972.6 1425.0 L1062.5 1406.8 L1152.6 1388.7 L1242.6 1370.7 L1332.8 1352.8 L1423.0 1335.0 L1513.3 1317.3 L1603.6 1299.7 L1694.0 1282.3 L1784.5 1264.9 L1875.0 1247.7 L1965.6 1230.5 L2056.3 1213.5 L2147.0 1196.6 L2237.8 1179.7 L2328.6 1163.0 L2419.5 1146.4"/>
<path d="M366.9 1631.7 L456.3 1612.8 L545.8 1593.9 L635.3 1575.2 L724.9 1556.6 L814.6 1538.0 L904.3 1519.6 L994.1 1501.3 L1083.9 1483.1 L1173.8 1465.0 L1263.8 1447.1 L1353.8 1429.2 L1443.9 1411.4 L1534.1 1393.8 L1624.3 1376.2 L1714.6 1358.8 L1804.9 1341.4 L1895.3 1324.2 L1985.8 1307.1 L2076.3 1290.1 L2166.9 1273.2 L2257.6 1256.4 L2348.3 1239.7 L2439.1 1223.1"/>
<path d="M389.3 1707.8 L478.5 1688.9 L567.9 1670.1 L657.3 1651.4 L746.8 1632.8 L836.3 1614.3 L925.9 1595.9 L1015.6 1577.6 L1105.3 1559.5 L1195.1 1541.4 L1284.9 1523.4 L1374.8 1505.6 L1464.8 1487.9 L1554.8 1470.2 L1644.9 1452.7 L1735.1 1435.3 L1825.3 1418.0 L1915.6 1400.8 L2005.9 1383.7 L2096.3 1366.7 L2186.8 1349.8 L2277.3 1333.0 L2367.9 1316.4 L2458.6 1299.8"/>
<path d="M411.5 1784.0 L500.7 1765.1 L589.9 1746.3 L679.2 1727.6 L768.6 1709.0 L858.0 1690.6 L947.4 1672.2 L1037.0 1653.9 L1126.6 1635.8 L1216.2 1617.8 L1306.0 1599.8 L1395.7 1582.0 L1485.6 1564.3 L1575.5 1546.7 L1665.5 1529.2 L1755.5 1511.8 L1845.6 1494.5 L1935.8 1477.3 L2026.0 1460.3 L2116.3 1443.3 L2206.6 1426.4 L2297.0 1409.7 L2387.5 1393.1 L2478.0 1376.5"/>
<path d="M433.8 1860.1 L522.8 1841.2 L611.9 1822.5 L701.1 1803.8 L790.3 1785.3 L879.6 1766.8 L968.9 1748.5 L1058.3 1730.3 L1147.8 1712.1 L1237.3 1694.1 L1326.9 1676.2 L1416.6 1658.4 L1506.3 1640.7 L1596.1 1623.1 L1686.0 1605.7 L1775.9 1588.3 L1865.9 1571.0 L1955.9 1553.9 L2046.0 1536.8 L2136.2 1519.9 L2226.4 1503.1 L2316.7 1486.3 L2407.0 1469.7 L2497.4 1453.2"/>
<path d="M455.9 1936.2 L544.8 1917.4 L633.8 1898.7 L722.8 1880.0 L811.9 1861.5 L901.1 1843.1 L990.3 1824.8 L1079.6 1806.6 L1169.0 1788.5 L1258.4 1770.5 L1347.9 1752.6 L1437.4 1734.8 L1527.0 1717.2 L1616.7 1699.6 L1706.4 1682.1 L1796.2 1664.8 L1886.0 1647.6 L1976.0 1630.4 L2065.9 1613.4 L2156.0 1596.5 L2246.1 1579.7 L2336.2 1563.0 L2426.5 1546.4 L2516.8 1529.9"/>
</g>
<g stroke="#a8a8b4" stroke-opacity=".58" stroke-width="1.3" stroke-dasharray="1.3 2.24" fill="none">
<path d="M602 73.1 H1920"/>
<path d="M602 437 H1920"/>
<path d="M602 801 H1920"/>
<path d="M602 1163 H1920"/>
<path d="M842 39 V1355"/>
<path d="M1205.5 39 V1355"/>
<path d="M1570 39 V1355"/>
</g>
<g font-weight="bold" font-size="24.4" fill="#9090b8" fill-opacity=".3">
<text x="609.5" y="72.5">34</text>
<text x="609.5" y="436.4">33.5</text>
<text x="609.5" y="800.4">33</text>
<text x="842" y="1353.6">-118.5</text>
<text x="1206" y="1353.6">-118</text>
<text x="1570" y="1353.6">-117.5</text>
</g>
<g stroke="#f6f6fa" stroke-width="1.45" fill="none" stroke-linejoin="round">
<path d="M600.0 110.5 L610.0 111.7 L622.5 112.2 L630.8 109.0 L641.0 104.4 L655.8 97.6 L662.6 90.8 L670.4 90.6 L676.7 87.2 L680.8 89.3 L702.7 89.3 L705.8 87.2 L710.0 89.3 L724.6 86.7 L729.8 84.0 L750.6 84.0 L752.7 81.7 L756.9 84.0 L769.9 84.0 L770.9 81.7 L801.7 81.7 L813.0 94.5 L828.6 110.0 L840.6 130.6 L857.8 147.8 L871.6 168.4 L882.0 185.6 L882.0 192.5 L868.0 201.0 L854.4 214.8 L851.0 237.0 L854.4 254.4 L866.4 271.6 L892.0 288.8 L923.0 300.8 L954.0 318.0 L978.0 320.4 L1005.6 318.0 L1019.4 309.4 L1033.0 297.4 L1091.6 297.4 L1095.0 295.0 L1114.0 294.0 L1129.4 319.7 L1143.0 330.0 L1181.0 357.5 L1218.8 378.0 L1260.0 402.0 L1328.8 436.6 L1342.5 450.0 L1354.5 457.0 L1358.0 465.5 L1373.4 482.7 L1395.8 503.3 L1411.0 503.3 L1414.7 501.6 L1438.8 520.5 L1459.4 536.0 L1466.0 541.0 L1469.7 546.0 L1487.0 556.6 L1517.8 573.8 L1545.0 596.0 L1557.0 608.0 L1562.5 616.7 L1583.0 637.0 L1603.8 656.0 L1617.5 671.7 L1634.7 701.0 L1648.4 725.0 L1658.8 744.0 L1667.4 773.0 L1677.7 811.0 L1689.7 845.0 L1696.6 866.0 L1694.9 879.7 L1686.0 900.0 L1683.5 910.0 L1686.0 924.0 L1692.4 943.0 L1694.9 968.8 L1696.6 1003.0 L1700.0 1027.0 L1707.0 1047.8 L1720.6 1065.0 L1736.0 1077.0 L1748.0 1079.4 L1762.0 1078.8 L1770.5 1076.0 L1775.6 1085.6 L1779.0 1106.0 L1780.8 1123.4 L1783.0 1141.7 L1810.0 1141.7 L1844.4 1138.0 L1878.8 1135.5 L1920.0 1133.0"/>
<path d="M720.8 438.5 L719.8 450.0 L721.9 462.5 L726.0 471.9 L736.5 482.9 L747.9 493.8 L751.0 501.0 L763.5 511.5 L779.2 517.7 L794.8 524.0 L806.2 525.0 L804.2 533.3 L805.2 545.8 L809.4 558.3 L814.6 568.8 L825.0 579.2 L831.2 586.5 L841.7 593.8 L853.1 600.0 L872.9 605.2 L885.4 606.9 L910.4 606.9 L912.5 605.2 L925.0 607.3 L929.2 610.4 L941.7 615.0 L955.2 618.8 L980.2 618.8 L991.7 616.7 L1006.2 610.4 L1018.8 602.0 L1025.0 594.8 L1029.2 581.2 L1030.8 566.7 L1028.1 554.2 L1022.9 541.7 L1015.6 530.2 L1006.2 525.0 L991.7 512.5 L984.4 507.3 L981.2 500.0 L979.2 489.6 L975.0 483.3 L966.7 476.0 L947.9 465.6 L941.7 460.4 L918.8 454.2 L903.1 451.0 L887.5 443.8 L879.2 435.4 L870.8 429.2 L860.4 426.0 L844.8 425.0 L841.7 420.8 L833.3 417.0 L825.0 414.2 L804.2 414.2 L802.0 415.6 L783.3 415.6 L781.2 414.2 L755.2 414.2 L746.9 416.2 L736.5 420.8 L727.0 430.2Z"/>
<path d="M719.8 800.8 L737.5 800.8 L739.6 809.6 L743.8 826.2 L750.0 838.8 L755.2 846.0 L763.5 853.3 L766.2 865.8 L768.8 875.2 L775.0 884.6 L785.4 896.0 L791.7 905.4 L797.9 911.7 L802.0 924.2 L814.6 936.7 L829.2 945.0 L837.5 948.0 L854.2 961.7 L858.3 967.9 L866.7 974.2 L881.2 980.8 L908.3 980.8 L918.8 977.3 L930.2 966.9 L933.3 969.0 L941.7 971.0 L954.2 970.6 L970.8 965.8 L985.4 955.4 L991.7 947.0 L995.4 936.7 L995.4 925.2 L992.7 915.8 L985.4 906.5 L977.0 900.2 L964.6 889.8 L947.9 879.4 L937.5 869.0 L925.0 862.7 L916.7 857.5 L900.0 842.9 L891.7 836.7 L879.2 828.3 L872.9 822.0 L858.3 805.4 L850.0 792.9 L846.9 782.5 L837.5 773.0 L831.2 764.8 L825.0 757.5 L812.5 747.0 L804.2 743.0 L787.5 737.7 L750.0 737.7 L737.5 740.8 L727.0 747.0 L718.8 756.5 L713.5 768.0 L712.9 782.5 L716.7 793.0Z"/>
</g>
<g font-weight="bold" font-size="21" opacity=".9">
<rect x="1035" y="265" width="7" height="7" fill="#0000ff"/>
<text x="1046" y="269" fill="#0a0aff">0.75 (%)</text>
<text x="1116" y="256.5" fill="#0a0aff">1.23 (-)</text>
<text x="1090" y="257" fill="#10d040">1.31 (%)</text>
<text x="1097" y="260" fill="#30e030">1.38 (%)</text>
<text x="1100" y="270.5" fill="#e8e818">1.58 (%)</text>
<text x="1058" y="257.5" fill="#f0e010">1.62 (%)</text>
<text x="1061.5" y="271.5" fill="#f0e010">1.54 (%)</text>
<rect x="1049" y="268.5" width="7.5" height="7" fill="#ffff00"/>
<rect x="1282.3" y="336" width="7.4" height="6.8" fill="#ff0000"/>
<text x="1291.3" y="339" fill="#e8081a">2.74 (%)</text>
</g>
<rect x="602" y="945" width="205" height="149" fill="#000" fill-opacity=".82"/>
<rect x="602" y="1093.5" width="226.8" height="148.5" fill="#000" fill-opacity=".82"/>
<text x="612.6" y="977.6" font-weight="bold" font-size="24.5" fill="#e6e6ee">Species(-)</text>
<rect x="618.1" y="983.3" width="32.7" height="33.6" fill="#2424cc"/>
<rect x="651.7" y="983.3" width="32.7" height="33.6" fill="#00b834"/>
<rect x="685.3" y="983.3" width="32.7" height="33.6" fill="#c2be3c"/>
<rect x="718.9" y="983.3" width="32.7" height="33.6" fill="#c2702a"/>
<rect x="752.5" y="983.3" width="32.7" height="33.6" fill="#c41022"/>
<text x="614" y="1128" font-size="20.9" fill="#c8c8d2">CMAQ</text>
<text x="692.8" y="1127" font-weight="bold" font-size="17.4" fill="#d2d2da">N(kg/ha)</text>
<rect x="618.75" y="1136.3" width="47.50" height="32.6" fill="url(#g1)"/>
<rect x="668.75" y="1136.3" width="40.00" height="32.6" fill="url(#g2)"/>
<rect x="711.6" y="1136.3" width="48.40" height="32.6" fill="url(#g3)"/>
<rect x="762.5" y="1136.3" width="49.40" height="32.6" fill="url(#g4)"/>
<text x="609.5" y="1162.4" font-weight="bold" font-size="24.4" fill="#a0a0d0" fill-opacity=".17">32.5</text>
<path d="M602 1163 H828" stroke="#a4a4b8" stroke-opacity=".25" stroke-width="1.3" stroke-dasharray="1.3 2.24"/>
<text x="619.5" y="1192" font-size="22.6" fill="#c8c8d2">0</text>
<rect x="602" y="1246" width="359" height="27.6" fill="#000010" fill-opacity=".93"/>
<rect x="602" y="1273.6" width="237.5" height="27.7" fill="#000010" fill-opacity=".93"/>
<rect x="602" y="1331" width="250.5" height="24" fill="#000008"/>
<g font-weight="bold" fill="#fff">
<text x="603.5" y="1269.6" font-size="21.05">o chlorophyll_a(ug/L) [1.07 to 2.74]</text>
<text x="603.5" y="1297.3" font-size="21.05">o TOC_% [0.32 to 2.74]</text>
<text x="603.5" y="1353.6" font-size="28.2">2015-07-01 11:00 Z</text>
</g>
</svg>
<div class="a" style="left:1316px;top:39px;width:2px;height:1316px;background:#d9d9d9"></div>
<div class="tbar"></div>
<div class="tl" style="left:14.5px;background:#ed6b5f;border:1px solid #d8574b"></div>
<div class="tl" style="left:49.5px;background:#f5bf4f;border:1px solid #dba83c"></div>
<div class="tl" style="left:84.5px;background:#61c454;border:1px solid #4fae42"></div>
<div class="ttl" style="left:146px;color:#2a2a2a;font-size:22px;letter-spacing:.2px">EDM:View <span style="letter-spacing:1.3px">745</span> [ <span style="letter-spacing:1.3px">1.81016</span>deg =  <span style="letter-spacing:1.3px">168.535</span>km] @ (-<span style="letter-spacing:1.3px">117.02215</span>, <span style="letter-spacing:1.3px">32.24214</span>):CMAQ=<span style="letter-spacing:1.3px">0.00029</span></div>
<div class="ttl" style="left:1165px;color:#2a2a2a;font-size:22.5px">.</div>
</div>
</body></html>
